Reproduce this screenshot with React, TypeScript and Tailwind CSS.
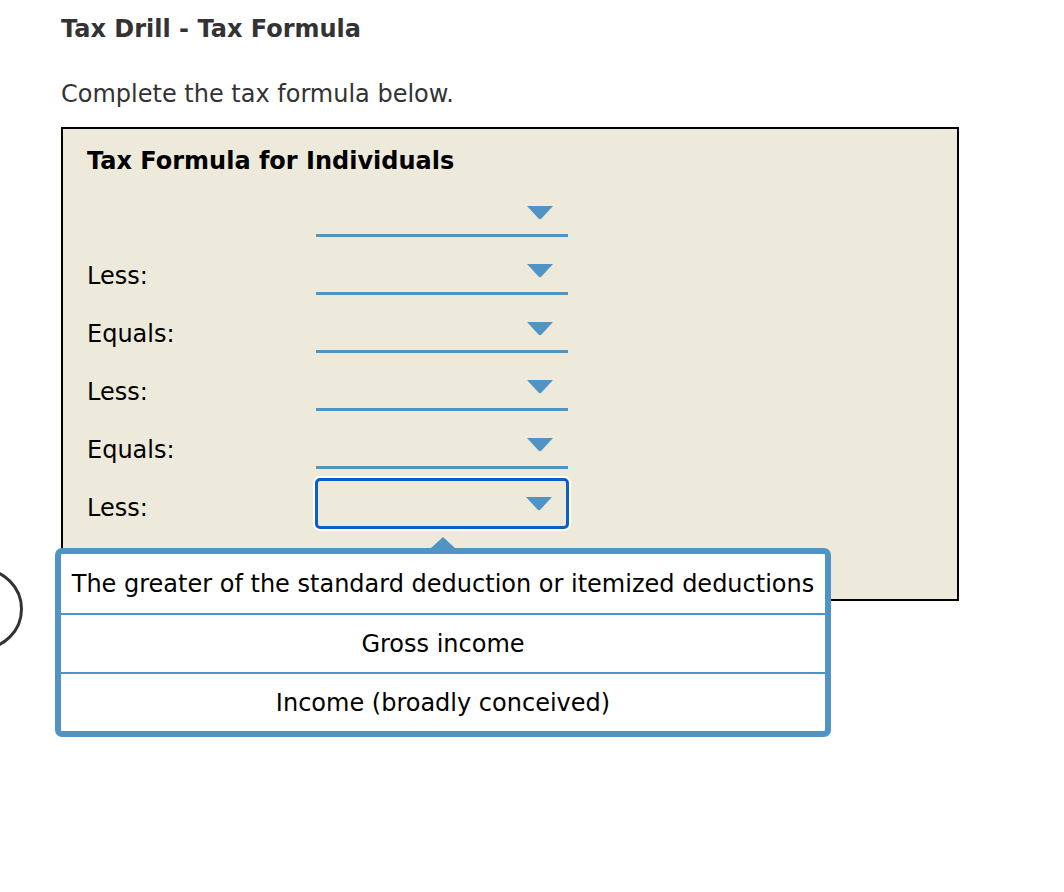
import React from "react";

const labels = ["", "Less:", "Equals:", "Less:", "Equals:", "Less:"];
const options = [
  "The greater of the standard deduction or itemized deductions",
  "Gross income",
  "Income (broadly conceived)",
];

function Arrow() {
  return (
    <svg width="28" height="15" viewBox="0 0 28 15" className="block">
      <path d="M1 1 L27 1 L15.5 13.5 Q14 15 12.5 13.5 Z" fill="#5094c4" />
    </svg>
  );
}

export default function App() {
  return (
    <div className="relative min-h-[892px] w-[1064px] overflow-hidden bg-white pl-[61px] pt-[15px] font-['DejaVu_Sans',sans-serif]">
      <h1 className="text-[24px] font-bold leading-[28px] text-[#333]">Tax Drill - Tax Formula</h1>
      <p className="mt-[37px] text-[24px] leading-[28px] text-[#333]">Complete the tax formula below.</p>

      <div className="mt-[19px] h-[474px] w-[898px] border-2 border-black bg-[#edeadc] pl-[24px] pt-[18px]">
        <h2 className="text-[24px] font-bold leading-[28px] text-black">Tax Formula for Individuals</h2>
        <div className="mt-[4px] flex flex-col">
          {labels.map((label, i) => {
            const focused = i === labels.length - 1;
            return (
              <div key={i} className="flex h-[58px] items-end">
                <div className="w-[229px] pb-[5px] text-[24px] leading-[28px] text-black">{label}</div>
                {focused ? (
                  <div className="mb-[-2px] flex h-[51px] w-[254px] -translate-x-[1px] items-center justify-end rounded-[5px] border-[3px] border-[#0a5fcc] pr-[13px] ring-2 ring-white">
                    <Arrow />
                  </div>
                ) : (
                  <div className="flex h-[42px] w-[252px] items-center justify-end border-b-[3px] border-[#5094c4] pr-[14px] pb-[4px]">
                    <Arrow />
                  </div>
                )}
              </div>
            );
          })}
        </div>
      </div>

      {/* open dropdown list */}
      <div className="absolute left-[55px] top-[537px]">
        <div className="ml-[376px] h-0 w-0 border-x-[12px] border-b-[11px] border-x-transparent border-b-[#5094c4]" />
        <div className="w-[776px] rounded-[7px] border-[6px] border-[#5094c4] bg-white">
          {options.map((opt, i) => (
            <div
              key={opt}
              className={
                "flex h-[59px] items-center justify-center text-[24px] text-black " +
                (i > 0 ? "border-t-2 border-[#5094c4]" : "")
              }
            >
              {opt}
            </div>
          ))}
        </div>
      </div>

      <div className="absolute left-[-59px] top-[568px] h-[82px] w-[82px] rounded-full border-[3px] border-[#333]" />
    </div>
  );
}
